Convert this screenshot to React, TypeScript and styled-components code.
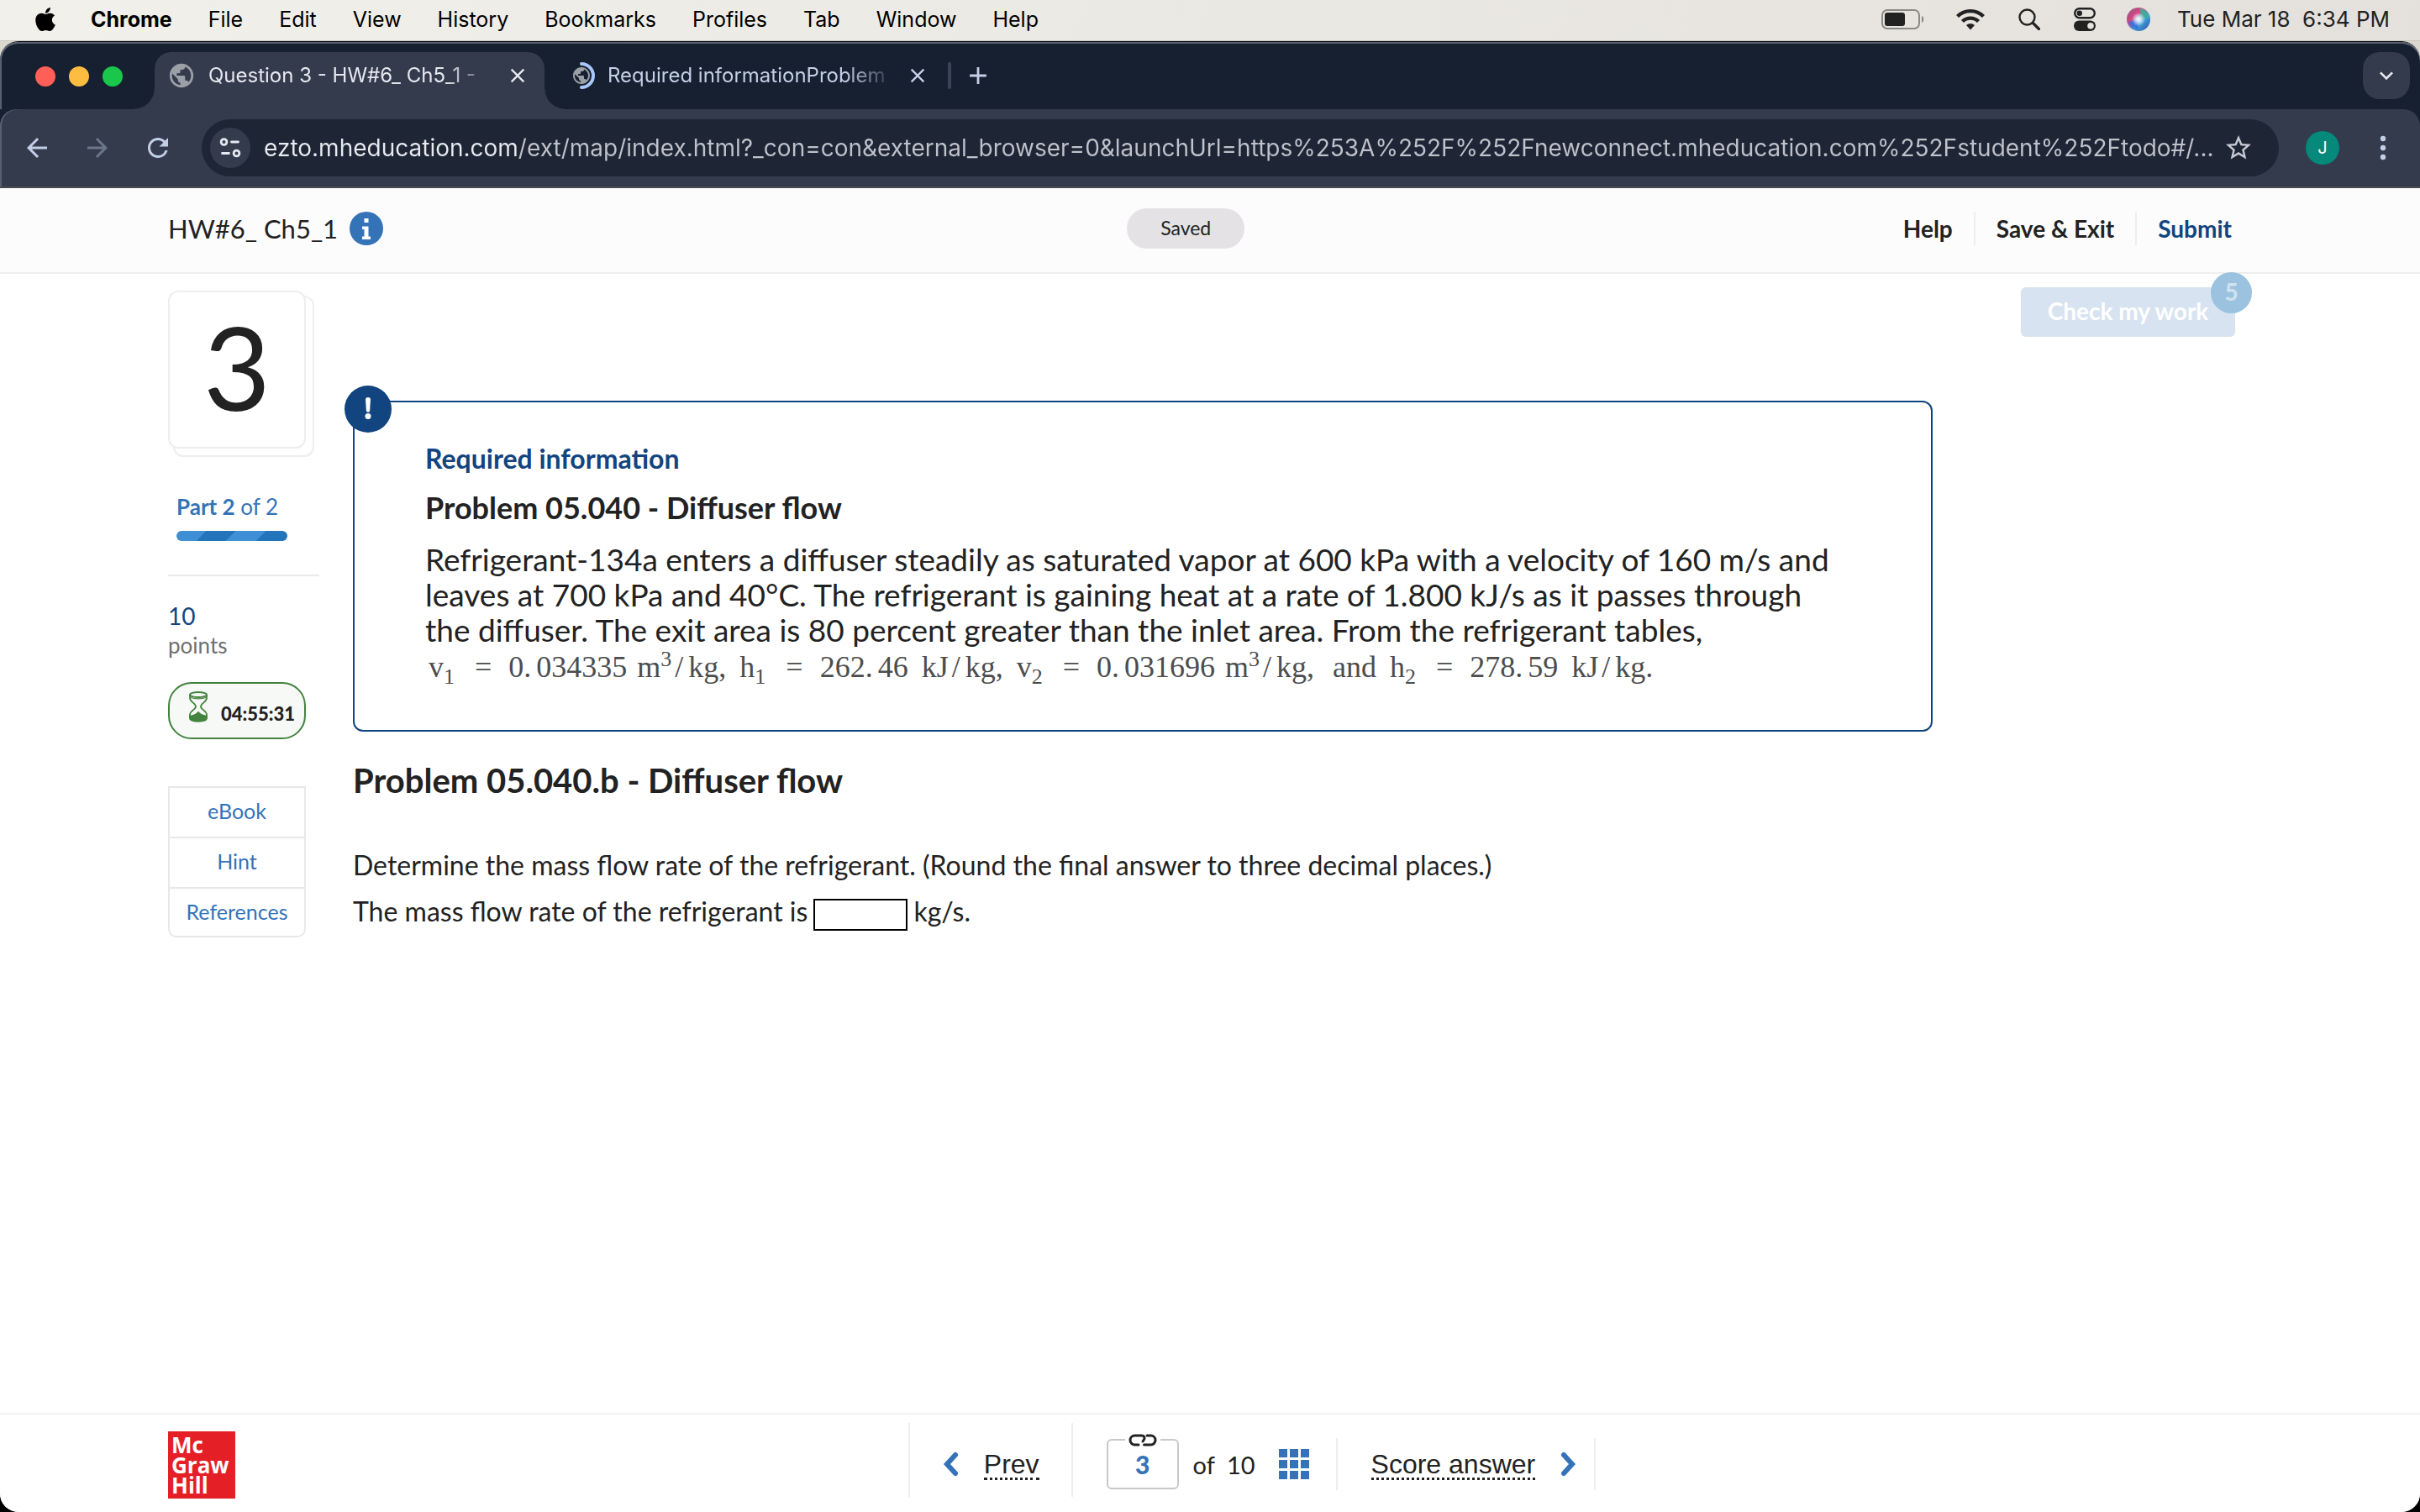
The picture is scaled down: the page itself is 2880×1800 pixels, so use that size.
import React, { Fragment } from "react";
import styled, { createGlobalStyle, css } from "styled-components";
import { FaApple } from "react-icons/fa";
import {
  MdAdd,
  MdArrowBack,
  MdArrowForward,
  MdClose,
  MdKeyboardArrowDown,
  MdPublic,
  MdRefresh,
  MdStarOutline,
} from "react-icons/md";

const color = {
  navy: "#12447f",
  blue: "#3573b9",
  ink: "#222222",
  line: "#eeeeee",
  strip: "#172030",
  toolbar: "#333b4c",
  field: "#1e2636",
  chromeText: "#c3cfe6",
  edge: "#566071",
};

const sans = `Lato, "Open Sans", sans-serif`;
const system = `Inter, Roboto, sans-serif`;

const GlobalStyle = createGlobalStyle`
  *, *::before, *::after { box-sizing: border-box; }
  html, body { margin: 0; padding: 0; }
  body {
    background: linear-gradient(#dad8cf 0 100px, #000 100px);
    font-family: ${sans};
    color: ${color.ink};
  }
  button, input { font: inherit; color: inherit; }
  button { border: 0; padding: 0; background: none; cursor: pointer; }
  h1, h2, h3, p { margin: 0; font-weight: inherit; font-size: inherit; }
  a { color: inherit; text-decoration: none; }
  svg { display: block; flex: none; }
`;

const Screen = styled.div`
  display: flex;
  flex-direction: column;
  min-height: 100vh;
`;

/* System menu bar */

const MenuBar = styled.header`
  display: flex;
  align-items: center;
  height: 49px;
  padding: 0 36px 2px 38px;
  background: linear-gradient(90deg, #f1f0ea, #e4e1dc);
  border-bottom: 1px solid #c9c7bf;
  font-family: ${system};
  font-size: 25px;
  line-height: 32px;
  color: #000;
`;

const MenuList = styled.nav`
  display: flex;
  flex: 1;
  gap: 43px;
  margin-left: 38px;
`;

const MenuItem = styled.button<{ $strong?: boolean }>`
  font-weight: ${(p) => (p.$strong ? 700 : 400)};
`;

const StatusArea = styled.div`
  display: flex;
  align-items: center;
  color: #222;
`;

const StatusIcon = styled.span<{ $after: number }>`
  margin-right: ${(p) => p.$after}px;
`;

const Clock = styled.span`
  font-size: 26px;
  white-space: pre;
`;

/* Browser window */

const BrowserWindow = styled.div`
  display: flex;
  flex: 1;
  flex-direction: column;
  overflow: hidden;
  border-top: 1px solid #05070b;
  border-radius: 22px;
  background: #fff;
`;

const TabStrip = styled.div`
  display: flex;
  align-items: flex-start;
  height: 80px;
  padding: 12px 12px 0 42px;
  background: ${color.strip};
  border-radius: 22px 22px 0 0;
  box-shadow: inset 0 2px 0 ${color.edge}, inset 2px 0 0 ${color.edge};
  font-family: ${system};
  font-size: 24px;
  color: ${color.chromeText};
`;

const Lights = styled.div`
  display: flex;
  align-items: center;
  gap: 16px;
  height: 58px;
  margin-right: 38px;
`;

const Light = styled.button<{ $fill: string }>`
  width: 24px;
  height: 24px;
  border-radius: 50%;
  background: ${(p) => p.$fill};
`;

const Tab = styled.div<{ $active?: boolean }>`
  position: relative;
  display: flex;
  align-items: center;
  width: 464px;
  height: 68px;
  padding: ${(p) => (p.$active ? "0 18px 12px 15px" : "0 6px 12px 28px")};
  ${(p) =>
    p.$active &&
    css`
      background: ${color.toolbar};
      border-radius: 20px 20px 0 0;
      color: #e6e8f0;
      &::before,
      &::after {
        content: "";
        position: absolute;
        bottom: 0;
        width: 24px;
        height: 24px;
      }
      &::before {
        right: 100%;
        background: radial-gradient(circle at 0 0, transparent 23px, ${color.toolbar} 24px);
      }
      &::after {
        left: 100%;
        background: radial-gradient(circle at 100% 0, transparent 23px, ${color.toolbar} 24px);
      }
    `}
`;

const TabTitle = styled.span`
  flex: 1;
  margin: 0 18px 0 15px;
  overflow: hidden;
  white-space: nowrap;
  line-height: 32px;
  mask-image: linear-gradient(90deg, #000 84%, transparent 102%);
`;

const TabRule = styled.span`
  width: 4px;
  height: 32px;
  margin: 12px 15px 0 16px;
  border-radius: 2px;
  background: #3a4456;
`;

const NewTab = styled.button`
  display: grid;
  place-items: center;
  width: 34px;
  height: 56px;
  margin-right: auto;
`;

const TabSearch = styled.button`
  display: grid;
  place-items: center;
  width: 56px;
  height: 56px;
  border-radius: 20px;
  background: ${color.toolbar};
  color: #e6e8f0;
`;

const ToolbarBack = styled.div`
  background: ${color.strip};
`;

const Toolbar = styled.div`
  display: flex;
  align-items: center;
  height: 94px;
  padding: 0 40px 0 26px;
  border-bottom: 2px solid #474b52;
  border-radius: 20px 20px 0 0;
  background: ${color.toolbar};
  box-shadow: inset 2px 0 0 ${color.edge};
  color: ${color.chromeText};
`;

const NavButtons = styled.div`
  display: flex;
  gap: 36px;
  margin-right: 34px;
`;

const NavButton = styled.button<{ $dim?: boolean }>`
  opacity: ${(p) => (p.$dim ? 0.4 : 1)};
`;

const Omnibox = styled.div`
  display: flex;
  flex: 1;
  align-items: center;
  height: 68px;
  padding: 0 30px 0 10px;
  border-radius: 34px;
  background: ${color.field};
`;

const SiteInfo = styled.button`
  display: grid;
  place-items: center;
  width: 48px;
  height: 48px;
  border-radius: 50%;
  background: ${color.toolbar};
`;

const Address = styled.input`
  flex: 1;
  min-width: 0;
  height: 48px;
  margin: 0 4px 0 16px;
  padding: 0;
  border: 0;
  outline: 0;
  font-family: ${system};
  font-size: 28px;
  background: linear-gradient(90deg, #e9ebf1 302px, #bfc2ca 302px);
  background-clip: text;
  color: transparent;
`;

const Avatar = styled.button`
  width: 40px;
  height: 40px;
  margin: 0 48px 0 32px;
  border-radius: 50%;
  background: #04897b;
  font-family: ${system};
  font-size: 20px;
  color: #fff;
`;

/* Assignment header */

const AssignmentBar = styled.header`
  display: grid;
  grid-template-columns: 34fr auto 35fr;
  align-items: center;
  height: 102px;
  padding: 0 224px 4px 200px;
  border-bottom: 2px solid ${color.line};
  background: #fcfcfc;
`;

const AssignmentTitle = styled.h1`
  display: flex;
  align-items: center;
  gap: 14px;
  font-size: 31px;
  line-height: 40px;
`;

const Saved = styled.div`
  width: 140px;
  height: 48px;
  border-radius: 24px;
  background: #e4e2e5;
  font-size: 23px;
  line-height: 46px;
  text-align: center;
`;

const Actions = styled.nav`
  display: flex;
  justify-content: flex-end;
`;

const Action = styled.button<{ $primary?: boolean }>`
  height: 40px;
  padding: 0 25px;
  border-left: 2px solid ${color.line};
  font-size: 28px;
  font-weight: 700;
  line-height: 38px;
  color: ${(p) => (p.$primary ? color.navy : color.ink)};
  &:first-child {
    border-left: 0;
  }
  &:last-child {
    padding-right: 0;
  }
`;

/* Question body */

const Body = styled.main`
  display: flex;
  flex: 1;
  align-items: flex-start;
  padding: 16px 220px 40px 200px;
`;

const Sidebar = styled.aside`
  width: 180px;
  margin-right: 40px;
  padding-top: 4px;
`;

const CardStack = styled.div`
  position: relative;
  width: 164px;
  height: 188px;
  &::before {
    content: "";
    position: absolute;
    inset: 6px -10px -10px 6px;
    border: 2px solid ${color.line};
    border-radius: 12px;
  }
`;

const NumberCard = styled.div`
  position: relative;
  height: 188px;
  border: 2px solid ${color.line};
  border-radius: 12px;
  background: #fff;
  font-size: 138px;
  line-height: 176px;
  text-align: center;
`;

const PartLabel = styled.p`
  margin: 54px 0 14px 10px;
  font-size: 26px;
  line-height: 30px;
  color: ${color.blue};
`;

const PartBar = styled.div`
  width: 132px;
  height: 12px;
  margin-left: 10px;
  border-radius: 6px;
  background: repeating-linear-gradient(135deg, #3f8fd4 0 25px, #2474bb 25px 50px);
`;

const Points = styled.div`
  margin-top: 40px;
  padding-top: 30px;
  border-top: 2px solid #ebebeb;
  font-size: 28px;
  line-height: 34px;
  color: ${color.navy};
`;

const PointsLabel = styled.p`
  font-size: 26px;
  line-height: 36px;
  color: #6f6f6f;
`;

const Timer = styled.div`
  display: flex;
  justify-content: space-between;
  width: 164px;
  height: 68px;
  margin-top: 26px;
  padding: 8px 11px 0 21px;
  border: 2px solid #43833f;
  border-radius: 28px;
  background: #f7f9f7;
  font-size: 22px;
  font-weight: 900;
  line-height: 56px;
`;

const ResourceList = styled.nav`
  display: flex;
  flex-direction: column;
  width: 164px;
  margin-top: 56px;
  border: 2px solid #e8e8e8;
  border-radius: 0 0 10px 10px;
`;

const Resource = styled.a`
  height: 60px;
  font-size: 25px;
  line-height: 55px;
  text-align: center;
  color: ${color.blue};
  &:not(:last-child) {
    border-bottom: 2px solid #e8e8e8;
  }
  &:last-child {
    height: 56px;
  }
`;

const Question = styled.section`
  flex: 1;
  min-width: 0;
  padding-top: 135px;
`;

const InfoBox = styled.section`
  position: relative;
  padding: 47px 84px 50px;
  border: 2px solid ${color.navy};
  border-radius: 12px;
`;

const AlertBadge = styled.span`
  position: absolute;
  top: -20px;
  left: -12px;
`;

const InfoLabel = styled.h2`
  font-size: 32px;
  font-weight: 700;
  line-height: 40px;
  color: ${color.navy};
`;

const InfoTitle = styled.h3`
  margin-top: 14px;
  font-size: 36px;
  font-weight: 700;
  line-height: 48px;
`;

const InfoText = styled.p`
  margin-top: 17px;
  font-size: 37px;
  line-height: 42px;
`;

const Formula = styled.p`
  display: flex;
  align-items: baseline;
  height: 48px;
  font-family: "Liberation Serif", serif;
  font-size: 36px;
  line-height: 46px;
  color: #4d4d4d;
  sub,
  sup {
    font-size: 26px;
    line-height: 0;
  }
`;

const Term = styled.span<{ $gap: number }>`
  margin-left: ${(p) => p.$gap}px;
`;

const PartTitle = styled.h2`
  margin-top: 32px;
  font-size: 40px;
  font-weight: 700;
  line-height: 52px;
`;

const Prompt = styled.p`
  margin-top: 55px;
  font-size: 32px;
  line-height: 40px;
`;

const AnswerRow = styled.div`
  display: flex;
  align-items: flex-start;
  gap: 7px;
  margin-top: 15px;
  font-size: 32px;
  line-height: 40px;
`;

const AnswerInput = styled.input`
  width: 112px;
  height: 38px;
  margin-top: 5px;
  padding: 0 6px;
  border: 2px solid #000;
  border-radius: 0;
  background: #fff;
`;

const CheckButton = styled.button`
  position: relative;
  width: 255px;
  height: 59px;
  margin-left: 105px;
  padding-bottom: 4px;
  border-radius: 6px;
  background: #d8e3f1;
  font-size: 28px;
  font-weight: 700;
  color: #fff;
`;

const CheckCount = styled.span`
  position: absolute;
  top: -18px;
  right: -20px;
  width: 49px;
  height: 49px;
  border-radius: 50%;
  background: #9bc2de;
  font-weight: 900;
  line-height: 46px;
  color: #cfe1ee;
`;

/* Footer */

const Footer = styled.footer`
  display: grid;
  grid-template-columns: 1fr auto 1fr;
  align-items: start;
  height: 118px;
  padding: 10px 100px 0 200px;
  border-top: 2px solid #f2f2f2;
  background: #fff;
`;

const Logo = styled.a`
  width: 80px;
  height: 80px;
  margin-top: 10px;
  padding: 4px 0 0 4px;
  background: #e41f26;
  font-family: "Open Sans", sans-serif;
  font-size: 26px;
  font-weight: 700;
  line-height: 24px;
  color: #fff;
`;

const Pager = styled.nav`
  display: flex;
  align-items: center;
  height: 88px;
  padding-top: 10px;
`;

const PagerGroup = styled.div<{ $tall?: boolean }>`
  display: flex;
  align-items: center;
  border-left: 2px solid ${color.line};
  border-right: 2px solid ${color.line};
  ${(p) =>
    p.$tall
      ? css`
          height: 88px;
          margin-top: -10px;
          padding: 10px 38px 0;
        `
      : css`
          height: 62px;
          padding: 0 20px 0 40px;
        `}
`;

const PagerButton = styled.button`
  display: flex;
  align-items: center;
  gap: 30px;
`;

const PagerText = styled.span`
  padding-top: 2px;
  border-bottom: 3px dotted ${color.ink};
  font-family: "Liberation Sans", Arial, sans-serif;
  font-size: 32px;
  line-height: 32px;
`;

const PageStatus = styled.div`
  display: flex;
  align-items: center;
  padding: 0 32px 0 40px;
  font-size: 30px;
`;

const PageField = styled.div`
  position: relative;
  margin-right: 17px;
`;

const PageInput = styled.input`
  display: block;
  width: 86px;
  height: 60px;
  padding: 0;
  border: 2px solid #c8c8c8;
  border-radius: 6px;
  background: #fff;
  font-weight: 900;
  text-align: center;
  color: ${color.blue};
`;

const LinkMark = styled.span`
  position: absolute;
  top: -6px;
  left: 22px;
  padding: 0 4px;
  background: #fff;
`;

const PageTotal = styled.span`
  display: flex;
  gap: 14px;
  margin-right: 28px;
  font-size: 29px;
`;

type TermData = { text: string; gap: number; sub?: string; sup?: string };

const perKg = (end: string): TermData[] => [
  { text: "/", gap: 4 },
  { text: `kg${end}`, gap: 6 },
];

const volume = (index: string, tail: string): TermData[] => [
  { text: "v", sub: index, gap: index === "1" ? 4 : 16 },
  { text: "=", gap: 24 },
  { text: "0.", gap: 20 },
  { text: tail, gap: 6 },
  { text: "m", sup: "3", gap: 12 },
  ...perKg(","),
];

const enthalpy = (index: string, whole: string, part: string, end: string): TermData[] => [
  { text: "h", sub: index, gap: 16 },
  { text: "=", gap: 24 },
  { text: whole, gap: 20 },
  { text: part, gap: 6 },
  { text: "kJ", gap: 16 },
  ...perKg(end),
];

const formula: TermData[] = [
  ...volume("1", "034335"),
  ...enthalpy("1", "262.", "46", ","),
  ...volume("2", "031696"),
  { text: "and", gap: 22 },
  ...enthalpy("2", "278.", "59", "."),
];

const menus = ["File", "Edit", "View", "History", "Bookmarks", "Profiles", "Tab", "Window", "Help"];

const Battery = () => (
  <svg width="52" height="24" viewBox="0 0 52 24">
    <rect x="1" y="1" width="44" height="22" rx="6" fill="none" stroke="#8b8a86" strokeWidth="2" />
    <rect x="4" y="4" width="24" height="16" rx="3" fill="#222" />
    <path d="M48 8c3 1 3 7 0 8z" fill="#8b8a86" />
  </svg>
);

const Wifi = () => (
  <svg width="34" height="26" viewBox="0 0 34 26" fill="none" stroke="#222" strokeWidth="4.4">
    <path d="M1.500 9.500a22 22 0 0 1 31 0" />
    <path d="M7.500 15.500a13.500 13.500 0 0 1 19 0" />
    <path d="M17 25.500l-5-5.500a7 7 0 0 1 10 0z" fill="#222" stroke="none" />
  </svg>
);

const Search = () => (
  <svg width="26" height="26" viewBox="0 0 26 26" fill="none" stroke="#222" strokeLinecap="round">
    <circle cx="10.500" cy="10.500" r="9" strokeWidth="2.400" />
    <path d="M17.500 17.500l7 7" strokeWidth="3.200" />
  </svg>
);

const ControlCenter = () => (
  <svg width="26" height="28" viewBox="0 0 26 28">
    <rect x="1.200" y="1.200" width="23.600" height="11" rx="5.500" fill="none" stroke="#222" strokeWidth="2.400" />
    <circle cx="6.800" cy="6.700" r="3.200" fill="#222" />
    <rect x="0" y="15.500" width="26" height="12.500" rx="6.200" fill="#222" />
    <circle cx="20" cy="21.700" r="3.800" fill="#e6e3de" />
  </svg>
);

const Siri = () => (
  <svg width="28" height="28" viewBox="0 0 28 28">
    <defs>
      <linearGradient id="siriBase" x1="0" y1="0" x2="1" y2="1">
        <stop offset="0" stopColor="#7b5a86" />
        <stop offset="0.350" stopColor="#d9477f" />
        <stop offset="0.600" stopColor="#3fa7d8" />
        <stop offset="1" stopColor="#2b46a8" />
      </linearGradient>
      <radialGradient id="siriGlow">
        <stop offset="0" stopColor="#fff" />
        <stop offset="0.350" stopColor="#dff2ff" stopOpacity="0.850" />
        <stop offset="1" stopColor="#fff" stopOpacity="0" />
      </radialGradient>
    </defs>
    <circle cx="14" cy="14" r="14" fill="url(#siriBase)" />
    <path d="M15 1a13 13 0 0 1 12 12c-4-1-9 0-13 1 3-4 3-9 1-13z" fill="#3fae98" opacity="0.850" />
    <path d="M2 17c4-1 9-2 12-3-1 4-1 8 0 12C8 26 3 22 2 17z" fill="#3a6be0" opacity="0.800" />
    <circle cx="14" cy="14" r="8" fill="url(#siriGlow)" />
  </svg>
);

const LoadingGlobe = () => (
  <svg width="32" height="32" viewBox="0 0 32 32">
    <g transform="translate(4 4)" color="#9aa0a6">
      <MdPublic size={24} />
    </g>
    <path d="M16 2a14 14 0 0 1 0 28" fill="none" stroke="#a8c7fa" strokeWidth="4" strokeLinecap="round" />
  </svg>
);

const Tune = () => (
  <svg width="26" height="26" viewBox="0 0 26 26" fill="none" stroke="#e6e8f0" strokeWidth="2.800" strokeLinecap="round">
    <circle cx="5.500" cy="6" r="3.400" />
    <path d="M14.500 6h8M3.500 19.500h8" />
    <circle cx="20.500" cy="19.500" r="3.400" />
  </svg>
);

const MoreDots = () => (
  <svg width="8" height="30" viewBox="0 0 8 30" fill="currentColor">
    <circle cx="4" cy="4" r="3.200" />
    <circle cx="4" cy="15" r="3.200" />
    <circle cx="4" cy="26" r="3.200" />
  </svg>
);

const InfoIcon = () => (
  <svg width="40" height="40" viewBox="0 0 40 40">
    <circle cx="20" cy="20" r="20" fill={color.blue} />
    <path d="M17.500 8h5v5h-5zM15 17.500h7.500V29.500H25V33H15v-3.500h2.500V21H15z" fill="#fff" />
  </svg>
);

const AlertIcon = () => (
  <svg width="56" height="56" viewBox="0 0 56 56">
    <circle cx="28" cy="28" r="28" fill={color.navy} />
    <path d="M25 16.500c0-3.300 6-3.300 6 0l-.900 13.500c-.200 2.300-4 2.300-4.200 0z" fill="#fff" />
    <circle cx="28" cy="36.500" r="3.500" fill="#fff" />
  </svg>
);

const Hourglass = () => (
  <svg width="26" height="38" viewBox="0 0 26 38" fill="none" stroke="#43833f" strokeWidth="1.800">
    <path d="M3 5v4c0 5 7 6 7 10s-7 5-7 10v4M23 5v4c0 5-7 6-7 10s7 5 7 10v4" />
    <ellipse cx="13" cy="5" rx="10" ry="3" />
    <path d="M4 8.500c5 1.800 13 1.800 18 0" strokeWidth="1.200" />
    <path d="M3 31c3-1 8-2 10-5 2 3 7 4 10 5v2c0 5-20 5-20 0z" fill="#43833f" />
  </svg>
);

const Chevron = ({ right }: { right?: boolean }) => (
  <svg width="20" height="30" viewBox="0 0 20 30" fill="none" stroke={color.blue} strokeWidth="6" strokeLinecap="round">
    <path d={right ? "M4 4l10 11L4 26" : "M16 4L6 15l10 11"} />
  </svg>
);

const LinkIcon = () => (
  <svg width="34" height="15" viewBox="0 0 34 15" fill="none" stroke={color.ink} strokeWidth="3" strokeLinecap="round">
    <path d="M12 13H7.500a5.500 5.500 0 0 1 0-11H15.500c3.500 0 4.500 3 2.500 5.500l-1 1.500" />
    <path d="M22 2h4.500a5.500 5.500 0 0 1 0 11H18.500" />
  </svg>
);

const GridIcon = () => (
  <svg width="36" height="36" viewBox="0 0 36 36" fill={color.blue}>
    {[0, 13, 26].map((y) => (
      <Fragment key={y}>
        {[0, 13, 26].map((x) => (
          <rect key={x} x={x} y={y} width="10" height="10" />
        ))}
      </Fragment>
    ))}
  </svg>
);

export default function App() {
  return (
    <Screen>
      <GlobalStyle />
      <MenuBar>
        <FaApple size={32} />
        <MenuList>
          <MenuItem $strong>Chrome</MenuItem>
          {menus.map((name) => (
            <MenuItem key={name}>{name}</MenuItem>
          ))}
        </MenuList>
        <StatusArea>
          <StatusIcon $after={37}><Battery /></StatusIcon>
          <StatusIcon $after={40}><Wifi /></StatusIcon>
          <StatusIcon $after={40}><Search /></StatusIcon>
          <StatusIcon $after={37}><ControlCenter /></StatusIcon>
          <StatusIcon $after={32}><Siri /></StatusIcon>
          <Clock>Tue Mar 18  6:34 PM</Clock>
        </StatusArea>
      </MenuBar>

      <BrowserWindow>
        <TabStrip>
          <Lights>
            <Light $fill="#ff5f57" aria-label="Close window" />
            <Light $fill="#febc40" aria-label="Minimize window" />
            <Light $fill="#19c84b" aria-label="Zoom window" />
          </Lights>
          <Tab $active>
            <MdPublic size={34} color="#9aa0a6" />
            <TabTitle>Question 3 - HW#6_ Ch5_1 -</TabTitle>
            <button aria-label="Close tab"><MdClose size={28} /></button>
          </Tab>
          <Tab>
            <LoadingGlobe />
            <TabTitle>Required informationProblem</TabTitle>
            <button aria-label="Close tab"><MdClose size={28} /></button>
          </Tab>
          <TabRule />
          <NewTab aria-label="New tab"><MdAdd size={34} /></NewTab>
          <TabSearch aria-label="Search tabs"><MdKeyboardArrowDown size={32} /></TabSearch>
        </TabStrip>
        <ToolbarBack>
          <Toolbar>
            <NavButtons>
              <NavButton aria-label="Back"><MdArrowBack size={36} /></NavButton>
              <NavButton aria-label="Forward" $dim><MdArrowForward size={36} /></NavButton>
              <NavButton aria-label="Reload"><MdRefresh size={36} /></NavButton>
            </NavButtons>
            <Omnibox>
              <SiteInfo aria-label="Site information"><Tune /></SiteInfo>
              <Address
                aria-label="Address"
                readOnly
                value="ezto.mheducation.com/ext/map/index.html?_con=con&external_browser=0&launchUrl=https%253A%252F%252Fnewconnect.mheducation.com%252Fstudent%252Ftodo#/..."
              />
              <button aria-label="Bookmark this page"><MdStarOutline size={36} color="#c8cad2" /></button>
            </Omnibox>
            <Avatar>J</Avatar>
            <button aria-label="Browser menu"><MoreDots /></button>
          </Toolbar>
        </ToolbarBack>

        <AssignmentBar>
          <AssignmentTitle>
            HW#6_ Ch5_1
            <button aria-label="Assignment information"><InfoIcon /></button>
          </AssignmentTitle>
          <Saved>Saved</Saved>
          <Actions>
            <Action>Help</Action>
            <Action>Save &amp; Exit</Action>
            <Action $primary>Submit</Action>
          </Actions>
        </AssignmentBar>

        <Body>
          <Sidebar>
            <CardStack>
              <NumberCard>3</NumberCard>
            </CardStack>
            <PartLabel><b>Part 2</b> of 2</PartLabel>
            <PartBar />
            <Points>
              <p>10</p>
              <PointsLabel>points</PointsLabel>
            </Points>
            <Timer>
              <Hourglass />
              <span>04:55:31</span>
            </Timer>
            <ResourceList>
              <Resource href="#ebook">eBook</Resource>
              <Resource href="#hint">Hint</Resource>
              <Resource href="#references">References</Resource>
            </ResourceList>
          </Sidebar>

          <Question>
            <InfoBox>
              <AlertBadge><AlertIcon /></AlertBadge>
              <InfoLabel>Required information</InfoLabel>
              <InfoTitle>Problem 05.040 - Diffuser flow</InfoTitle>
              <InfoText>
                Refrigerant-134a enters a diffuser steadily as saturated vapor at 600 kPa with a velocity of 160 m/s and
                <br />
                leaves at 700 kPa and 40°C. The refrigerant is gaining heat at a rate of 1.800 kJ/s as it passes through
                <br />
                the diffuser. The exit area is 80 percent greater than the inlet area. From the refrigerant tables,
              </InfoText>
              <Formula>
                {formula.map((term, i) => (
                  <Term key={i} $gap={term.gap}>
                    {term.text}
                    {term.sub && <sub>{term.sub}</sub>}
                    {term.sup && <sup>{term.sup}</sup>}
                  </Term>
                ))}
              </Formula>
            </InfoBox>
            <PartTitle>Problem 05.040.b - Diffuser flow</PartTitle>
            <Prompt>
              Determine the mass flow rate of the refrigerant. (Round the final answer to three decimal places.)
            </Prompt>
            <AnswerRow>
              <label htmlFor="answer">The mass flow rate of the refrigerant is</label>
              <AnswerInput id="answer" type="text" />
              <span>kg/s.</span>
            </AnswerRow>
          </Question>

          <CheckButton>
            Check my work
            <CheckCount>5</CheckCount>
          </CheckButton>
        </Body>

        <Footer>
          <Logo href="#home">
            Mc
            <br />
            Graw
            <br />
            Hill
          </Logo>
          <Pager>
            <PagerGroup $tall>
              <PagerButton>
                <Chevron />
                <PagerText>Prev</PagerText>
              </PagerButton>
            </PagerGroup>
            <PageStatus>
              <PageField>
                <PageInput aria-label="Question number" defaultValue="3" />
                <LinkMark><LinkIcon /></LinkMark>
              </PageField>
              <PageTotal>
                <span>of</span>
                <span>10</span>
              </PageTotal>
              <button aria-label="Question list"><GridIcon /></button>
            </PageStatus>
            <PagerGroup>
              <PagerButton>
                <PagerText>Score answer</PagerText>
                <Chevron right />
              </PagerButton>
            </PagerGroup>
          </Pager>
        </Footer>
      </BrowserWindow>
    </Screen>
  );
}
